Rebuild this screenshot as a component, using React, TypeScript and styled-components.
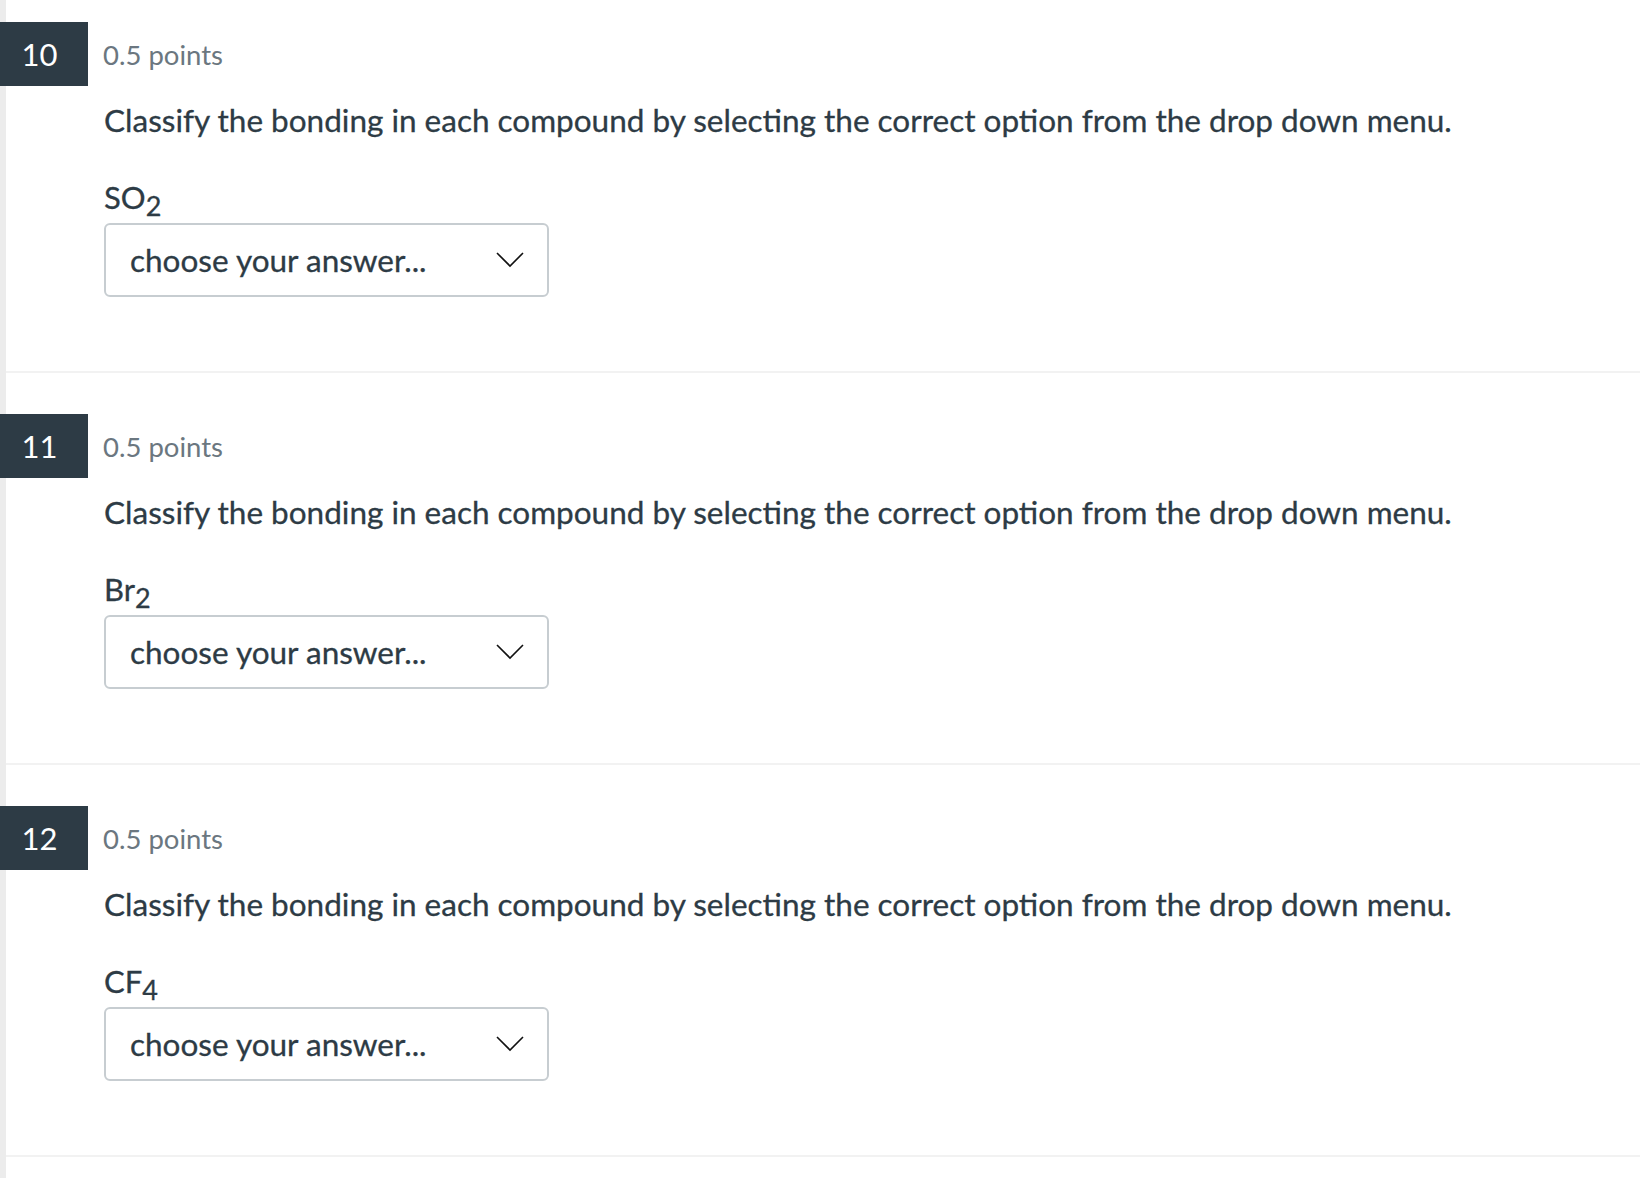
import React from 'react'
import styled, { createGlobalStyle } from 'styled-components'

const GlobalStyle = createGlobalStyle`
    html, body {
        margin: 0;
        padding: 0;
        background: #fff;
        font-family: Lato, 'Open Sans', sans-serif;
    }
`

interface Question {
    number: number
    points: string
    text: string
    formula: string
    sub: string
}

const prompt =
    'Classify the bonding in each compound by selecting the correct option from the drop down menu.'

const questions: Question[] = [
    { number: 10, points: '0.5 points', text: prompt, formula: 'SO', sub: '2' },
    { number: 11, points: '0.5 points', text: prompt, formula: 'Br', sub: '2' },
    { number: 12, points: '0.5 points', text: prompt, formula: 'CF', sub: '4' }
]

const Chevron = () => (
    <svg width="30" height="18" viewBox="0 0 30 18" fill="none">
        <path d="M2 2 L15 15 L28 2" stroke="#111" strokeWidth="1.6" />
    </svg>
)

const QuestionBlock: React.FC<{ q: Question; first?: boolean }> = ({ q, first }) => (
    <Section $first={first}>
        <Header>
            <Badge>{q.number}</Badge>
            <Points>{q.points}</Points>
        </Header>
        <Body>
            <Prompt>{q.text}</Prompt>
            <Formula>
                {q.formula}
                <Sub>{q.sub}</Sub>
            </Formula>
            <Select>
                <span>choose your answer...</span>
                <Chevron />
            </Select>
        </Body>
    </Section>
)

export default function App() {
    return (
        <>
            <GlobalStyle />
            <Page>
                {questions.map((q, i) => (
                    <QuestionBlock key={q.number} q={q} first={i === 0} />
                ))}
            </Page>
        </>
    )
}

const Page = styled.div`
    min-height: 1178px;
    border-left: 6px solid #ececec;
    box-sizing: border-box;
`

const Section = styled.div<{ $first?: boolean }>`
    padding-top: ${(p) => (p.$first ? '22px' : '41px')};
    padding-bottom: 74px;
    border-bottom: 2px solid #f2f2f2;
`

const Header = styled.div`
    display: flex;
    align-items: center;
    height: 64px;
    margin-left: -6px;
`

const Badge = styled.div`
    width: 88px;
    height: 64px;
    background: #2d3b45;
    color: #fff;
    font-size: 31px;
    display: flex;
    align-items: center;
    justify-content: center;
    box-sizing: border-box;
    padding-right: 9px;
`

const Points = styled.div`
    margin-left: 15px;
    font-size: 27.5px;
    color: #6b7780;
`

const Body = styled.div`
    padding-left: 98px;
    color: #2d3b45;
    -webkit-text-stroke: 0.3px #2d3b45;
`

const Prompt = styled.p`
    margin: 10px 0 0;
    font-size: 31.5px;
    line-height: 48px;
`

const Formula = styled.div`
    margin-top: 29px;
    font-size: 31px;
    line-height: 48px;
    height: 48px;
`

const Sub = styled.sub`
    font-size: 27px;
    vertical-align: -7px;
    line-height: 0;
`

const Select = styled.div`
    margin-top: 2px;
    width: 445px;
    height: 74px;
    box-sizing: border-box;
    border: 2px solid #c7cdd1;
    border-radius: 6px;
    display: flex;
    align-items: center;
    justify-content: space-between;
    padding: 0 22px 0 24px;
    font-size: 31.5px;
    color: #2d3b45;
`
